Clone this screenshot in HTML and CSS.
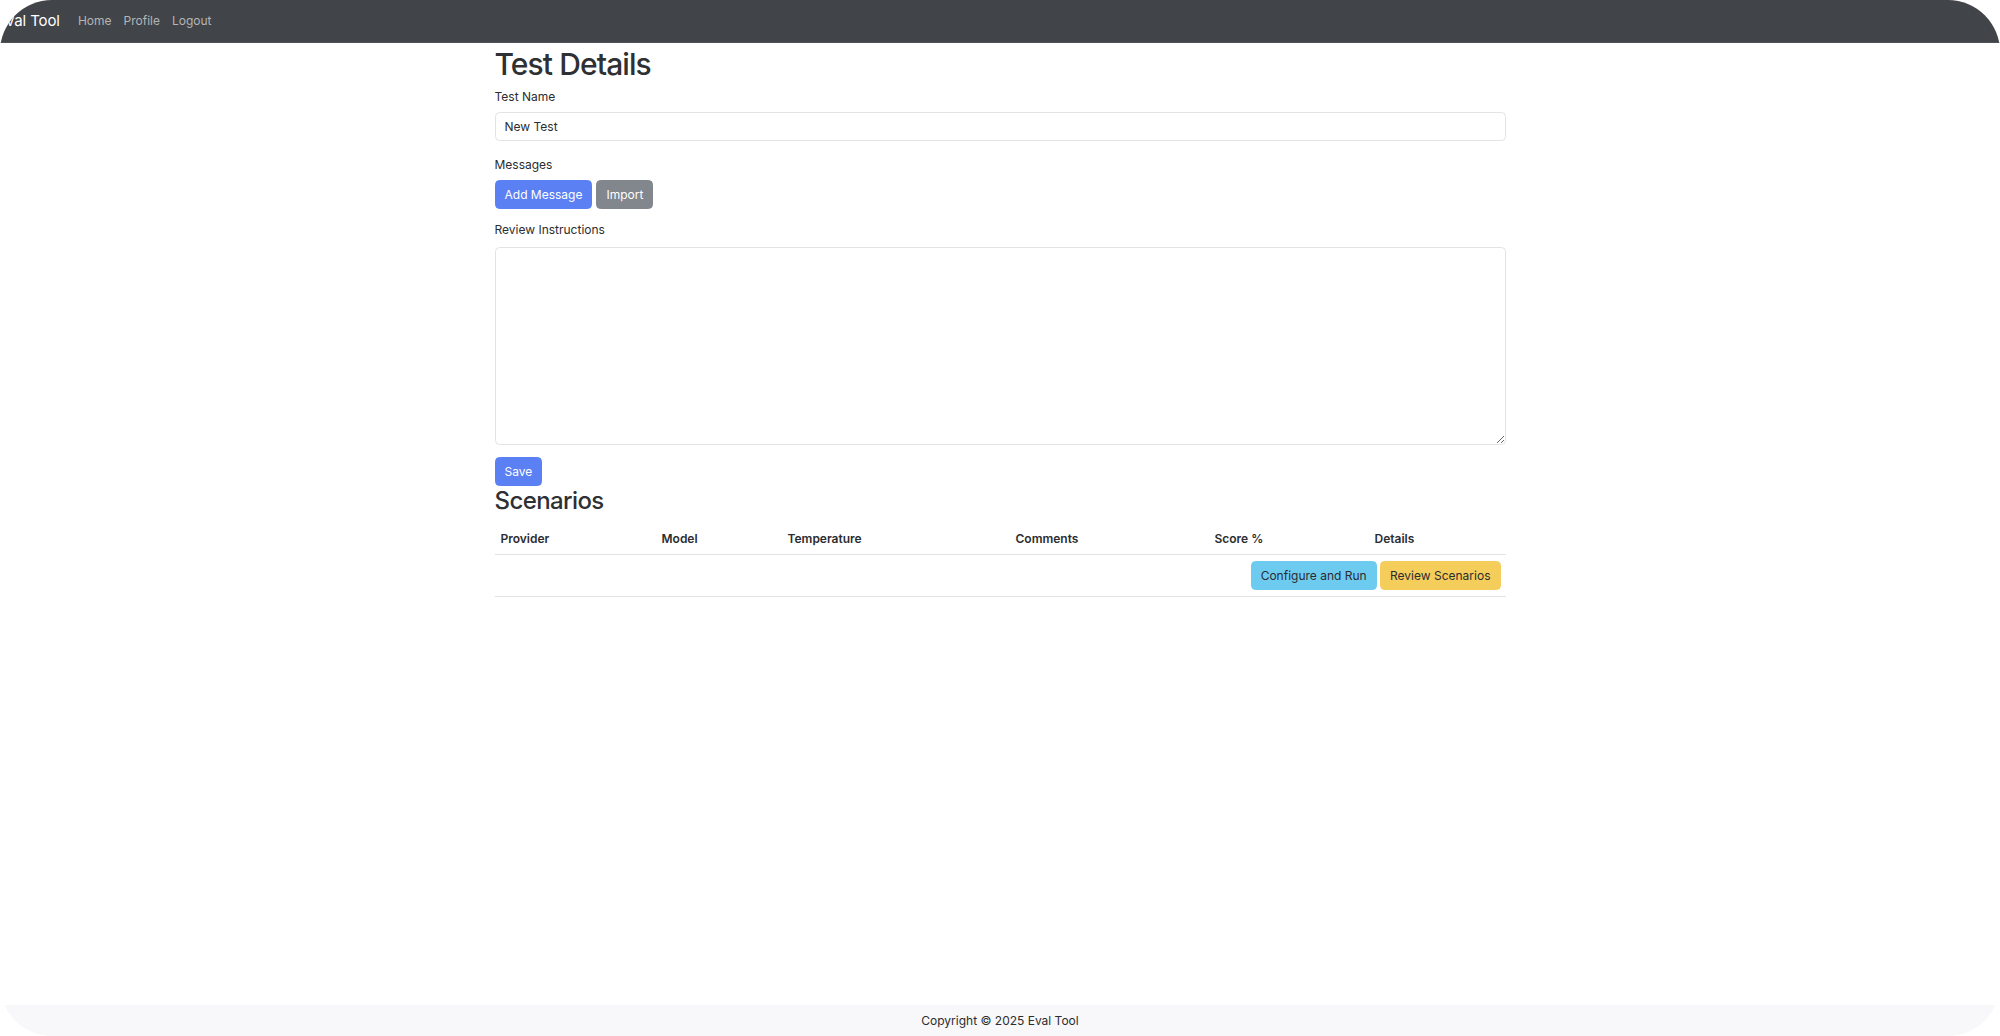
FILE: index.html
```html
<!DOCTYPE html>
<html lang="en">
<head>
    <meta charset="UTF-8">
    <meta name="viewport" content="width=device-width, initial-scale=1.0">
    <title>Eval Tool - Test Details</title>
    <link rel="stylesheet" href="styles.css">
</head>
<body>
    <div class="window">
        <nav class="navbar">
            <a class="brand" href="#">Eval Tool</a>
            <ul class="nav-links">
                <li><a href="#">Home</a></li>
                <li><a href="#">Profile</a></li>
                <li><a href="#">Logout</a></li>
            </ul>
        </nav>

        <main class="container">
            <h1>Test Details</h1>
            <form class="test-form">
                <div class="group">
                    <label for="testName">Test Name</label>
                    <input type="text" id="testName" class="field" value="New Test">
                </div>
                <div class="group messages">
                    <label>Messages</label>
                    <div class="btn-row">
                        <button type="button" class="btn btn-primary">Add Message</button>
                        <button type="button" class="btn btn-secondary">Import</button>
                    </div>
                </div>
                <div class="group">
                    <label for="reviewInstructions" class="label-tall">Review Instructions</label>
                    <textarea id="reviewInstructions" class="field area"></textarea>
                </div>
                <button type="submit" class="btn btn-primary">Save</button>
            </form>

            <h2>Scenarios</h2>
            <table class="table">
                <colgroup>
                    <col class="c-provider">
                    <col class="c-model">
                    <col class="c-temp">
                    <col class="c-comments">
                    <col class="c-score">
                    <col class="c-details">
                </colgroup>
                <thead>
                    <tr>
                        <th>Provider</th>
                        <th>Model</th>
                        <th>Temperature</th>
                        <th>Comments</th>
                        <th>Score %</th>
                        <th>Details</th>
                    </tr>
                </thead>
                <tbody>
                    <tr>
                        <td colspan="6" class="actions">
                            <button type="button" class="btn btn-info">Configure and Run</button>
                            <button type="button" class="btn btn-warning">Review Scenarios</button>
                        </td>
                    </tr>
                </tbody>
            </table>
        </main>

        <footer class="footer">Copyright &copy; 2025 Eval Tool</footer>
    </div>
</body>
</html>
```

FILE: styles.css
```css
body {
    margin: 0;
    background: #fff;
    font-family: Inter, "Liberation Sans", Arial, sans-serif;
    font-size: 12px;
    line-height: 18px;
    color: #2b2d30;
}
.window {
    height: 1036px;
    border-radius: 52px;
    overflow: hidden;
    display: flex;
    flex-direction: column;
    background: #fff;
}
.navbar {
    height: 42px;
    flex: none;
    background: #414448;
    border-bottom: 1px solid #4f5256;
    display: flex;
    align-items: center;
}
.brand {
    margin-left: -3px;
    margin-right: 12px;
    font-size: 15px;
    letter-spacing: -0.1px;
    color: #fff;
    text-decoration: none;
}
.nav-links {
    display: flex;
    list-style: none;
    margin: 0;
    padding: 0;
}
.nav-links a {
    display: block;
    padding: 0 6px;
    color: #b4b5b7;
    text-decoration: none;
}
.container {
    flex: 1;
    width: 1011px;
    margin: 0 auto;
    padding-top: 3px;
}
h1 {
    margin: 0 0 6px;
    font-size: 30px;
    line-height: 36px;
    font-weight: 500;
    letter-spacing: -0.9px;
    color: #2e3033;
}
h2 {
    margin: 0 0 9px;
    font-size: 24px;
    line-height: 29px;
    font-weight: 500;
    letter-spacing: -0.6px;
    color: #2e3033;
}
.group {
    margin-bottom: 12px;
}
.messages {
    margin-top: 15px;
}
label {
    display: block;
    margin-bottom: 6px;
}
.label-tall {
    margin-bottom: 8px;
}
.field {
    display: block;
    box-sizing: border-box;
    width: 100%;
    height: 29px;
    padding: 4px 9px;
    border: 1px solid #e2e3e5;
    border-radius: 4.5px;
    font-family: inherit;
    font-size: 12px;
    color: #2b2d30;
    background: #fff;
}
.area {
    height: 198px;
    resize: vertical;
}
.btn-row {
    display: flex;
    gap: 4px;
}
.btn {
    box-sizing: border-box;
    height: 29px;
    padding: 0 9px;
    border: 1px solid transparent;
    border-radius: 4.5px;
    font-family: inherit;
    font-size: 12px;
    line-height: 18px;
    vertical-align: middle;
    cursor: pointer;
}
.btn-primary {
    background: #5a80f4;
    border-color: #5a80f4;
    color: #fff;
}
.btn-secondary {
    background: #82868d;
    border-color: #82868d;
    color: #fff;
}
.btn-info {
    background: #6dcbef;
    border-color: #6dcbef;
    color: #2a2c2f;
}
.btn-warning {
    background: #f4cd5b;
    border-color: #f4cd5b;
    color: #2a2c2f;
}
.table {
    width: 100%;
    border-collapse: collapse;
    table-layout: fixed;
}
.c-provider { width: 161px; }
.c-model { width: 126px; }
.c-temp { width: 228px; }
.c-comments { width: 199px; }
.c-score { width: 160px; }
.c-details { width: 137px; }
.table th {
    padding: 6px;
    text-align: left;
    font-weight: 600;
    border-bottom: 1px solid #e2e3e5;
}
.table td {
    padding: 6px 5px 6px 6px;
    border-bottom: 1px solid #e2e3e5;
}
.actions {
    text-align: right;
}
.footer {
    flex: none;
    height: 31px;
    background: #f8f8fa;
    text-align: center;
    line-height: 31px;
    color: #2b2d30;
}
```
